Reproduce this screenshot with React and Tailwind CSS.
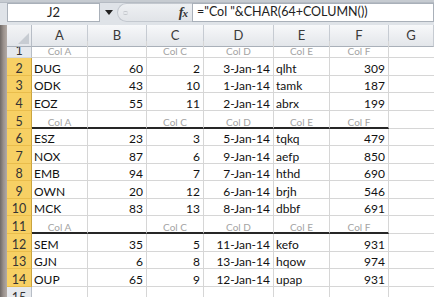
import React from "react";

const TEMPLATE = "grid grid-cols-[25px_56px_59px_57px_70px_56px_59px_1fr] shrink-0";

const rows = [
  { n: 1, h: "h-[17px]", type: "hdr", sel: false },
  { n: 2, h: "h-[18px]", d: ["DUG", "60", "2", "3-Jan-14", "qlht", "309"], sel: true },
  { n: 3, h: "h-[17px]", d: ["ODK", "43", "10", "1-Jan-14", "tamk", "187"], sel: true },
  { n: 4, h: "h-[18px]", d: ["EOZ", "55", "11", "2-Jan-14", "abrx", "199"], sel: true },
  { n: 5, h: "h-[18px]", type: "hdr", thick: true, sel: true },
  { n: 6, h: "h-[17px]", d: ["ESZ", "23", "3", "5-Jan-14", "tqkq", "479"], sel: true },
  { n: 7, h: "h-[18px]", d: ["NOX", "87", "6", "9-Jan-14", "aefp", "850"], sel: true },
  { n: 8, h: "h-[17px]", d: ["EMB", "94", "7", "7-Jan-14", "hthd", "690"], sel: true },
  { n: 9, h: "h-[18px]", d: ["OWN", "20", "12", "6-Jan-14", "brjh", "546"], sel: true },
  { n: 10, h: "h-[17px]", d: ["MCK", "83", "13", "8-Jan-14", "dbbf", "691"], sel: true },
  { n: 11, h: "h-[18px]", type: "hdr", thick: true, sel: true },
  { n: 12, h: "h-[18px]", d: ["SEM", "35", "5", "11-Jan-14", "kefo", "931"], sel: true },
  { n: 13, h: "h-[17px]", d: ["GJN", "6", "8", "13-Jan-14", "hqow", "974"], sel: true },
  { n: 14, h: "h-[18px]", d: ["OUP", "65", "9", "12-Jan-14", "upap", "931"], sel: true },
  { n: 15, h: "h-[18px]", empty: true, sel: false },
];

const HDR_LABELS = ["Col A", "", "Col C", "Col D", "Col E", "Col F"];
const ALIGN = ["left", "right", "right", "right", "left", "right"];

function RowHeader({ n, sel }) {
  return (
    <div
      className={
        "flex items-end justify-center border-r border-b text-[12.5px] leading-[10px] pb-[1px] text-[#333] " +
        (sel
          ? "bg-[#f7d064] border-r-[#c9a43f] border-b-[#e9bd4c]"
          : "bg-[#e6e9ed] border-r-[#b7bdc6] border-b-[#d3d7dc]")
      }
    >
      {n}
    </div>
  );
}

function Row({ row }) {
  const cells = [];
  for (let i = 0; i < 6; i++) {
    let content = null;
    let cls =
      "flex items-end border-r border-r-[#d6d6d6] whitespace-nowrap ";
    cls += row.thick ? "border-b-2 border-b-[#262626] " : "border-b border-b-[#d6d6d6] ";
    if (row.type === "hdr") {
      content = HDR_LABELS[i];
      cls +=
        "justify-center text-[10px] leading-[10px] text-[#a3a3a3] " +
        (row.thick ? "pb-[0px]" : "pb-[1px]");
    } else if (!row.empty) {
      content = row.d[i];
      cls +=
        "text-[12px] leading-[10px] pb-[1px] text-[#111] " +
        (ALIGN[i] === "right" ? "justify-end pr-[3px]" : "justify-start pl-[2px]");
    }
    cells.push(
      <div key={i} className={cls}>
        {content}
      </div>
    );
  }
  return (
    <div className={TEMPLATE + " " + row.h}>
      <RowHeader n={row.n} sel={row.sel} />
      {cells}
      <div className="border-b border-b-[#d6d6d6]" />
    </div>
  );
}

function ColHeader({ label }) {
  return (
    <div className="flex items-center justify-center border-r border-r-[#c6cbd2] border-b border-b-[#a9b0b9] bg-gradient-to-b from-[#f7f8fa] to-[#e3e6ea] text-[13px] text-[#3a3a3a] pt-[1px]">
      {label}
    </div>
  );
}

export default function App() {
  return (
    <div
      className="w-[434px] h-[297px] overflow-hidden bg-white flex flex-col"
      style={{ fontFamily: "Lato, 'Open Sans', sans-serif" }}
    >
      {/* Formula bar */}
      <div className="h-[25px] shrink-0 bg-[#dfe3e8] flex flex-col">
        <div className="h-[3px] bg-[#c6cbd1] border-b border-b-[#b5bbc3]" />
        <div className="h-[19px] flex items-stretch">
          <div className="w-[7px]" />
          <div className="w-[93px] bg-white border border-[#a9b0b9] flex items-center justify-center text-[13px] text-[#222]">
            J2
          </div>
          <div className="w-[17px] flex items-center justify-center">
            <svg width="8" height="5" viewBox="0 0 8 5">
              <path d="M0 0 L8 0 L4 5 Z" fill="#222" />
            </svg>
          </div>
          <div className="w-[75px] rounded-l-[10px] border border-r-0 border-[#c3c8cf] bg-gradient-to-b from-[#eef0f3] to-[#e1e4e8] flex items-center justify-between pl-[5px] pr-[5px]">
            <div className="w-[5px] h-[4px] rounded-full border-t border-b border-[#c3c7cc]" />
            <span
              className="text-[14px] italic font-bold text-[#333] tracking-[-1px]"
              style={{ fontFamily: "'Liberation Serif', serif" }}
            >
              f<span className="text-[11px]">x</span>
            </span>
          </div>
          <div className="flex-1 bg-white border border-[#a9b0b9] flex items-center pl-[4px] text-[12.5px] text-[#222] whitespace-nowrap overflow-hidden">
            {'="Col "&CHAR(64+COLUMN())'}
          </div>
        </div>
      </div>

      {/* Sheet */}
      <div className="flex flex-1 min-h-0">
        <div className="w-[7px] shrink-0 bg-gradient-to-r from-[#6f6966] via-[#9a918c] to-[#b3aba6]" />
        <div className="flex-1 flex flex-col overflow-hidden">
          <div className={TEMPLATE + " h-[16px]"}>
            <div className="relative border-r border-r-[#b7bdc6] border-b border-b-[#a9b0b9] bg-gradient-to-b from-[#f3f4f6] to-[#e3e6ea]">
              <svg className="absolute right-[2px] bottom-[2px]" width="11" height="11" viewBox="0 0 11 11">
                <path d="M11 0 L11 11 L0 11 Z" fill="#c7ccd2" />
              </svg>
            </div>
            {["A", "B", "C", "D", "E", "F", "G"].map((l) => (
              <ColHeader key={l} label={l} />
            ))}
          </div>
          {rows.map((r) => (
            <Row key={r.n} row={r} />
          ))}
        </div>
      </div>
    </div>
  );
}
